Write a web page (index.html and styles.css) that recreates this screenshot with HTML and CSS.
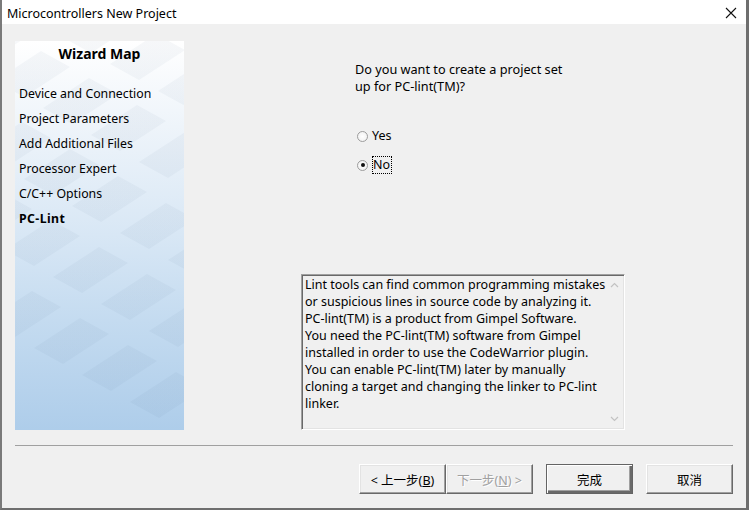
FILE: index.html
```html
<!DOCTYPE html>
<html>
<head>
    <meta charset="UTF-8">
    <link rel="stylesheet" href="styles.css">
</head>
<body>
    <div class="window">
        <div class="titlebar">
            <span class="title">Microcontrollers New Project</span>
            <svg class="close-icon" width="12" height="12" viewBox="0 0 12 12">
                <path d="M1 1 L11 11 M11 1 L1 11" stroke="#111" stroke-width="1.1" fill="none"/>
            </svg>
        </div>

        <div class="content">
            <div class="main">
                <div class="wizard-map">
                    <svg class="tiles" width="169" height="389" viewBox="0 0 169 389">
                        <defs>
                            <linearGradient id="fade" gradientUnits="userSpaceOnUse" x1="0" y1="0" x2="0" y2="389">
                                <stop offset="0" stop-color="#36557a" stop-opacity="0.045"/>
                                <stop offset="0.72" stop-color="#36557a" stop-opacity="0.055"/>
                                <stop offset="0.86" stop-color="#36557a" stop-opacity="0"/>
                            </linearGradient>
                            <polygon id="tile" points="0,0 46,-30 75,-14 29,16"/>
                        </defs>
                        <g fill="url(#fade)">
                            <use href="#tile" x="47" y="-4"/>
                            <use href="#tile" x="95" y="23"/>
                            <use href="#tile" x="143" y="50"/>
                            <use href="#tile" x="-68" y="13"/>
                            <use href="#tile" x="-20" y="40"/>
                            <use href="#tile" x="28" y="67"/>
                            <use href="#tile" x="76" y="94"/>
                            <use href="#tile" x="124" y="121"/>
                            <use href="#tile" x="-39" y="111"/>
                            <use href="#tile" x="9" y="138"/>
                            <use href="#tile" x="57" y="165"/>
                            <use href="#tile" x="105" y="192"/>
                            <use href="#tile" x="153" y="219"/>
                            <use href="#tile" x="-58" y="182"/>
                            <use href="#tile" x="-10" y="209"/>
                            <use href="#tile" x="38" y="236"/>
                            <use href="#tile" x="86" y="263"/>
                            <use href="#tile" x="134" y="290"/>
                            <use href="#tile" x="-29" y="280"/>
                            <use href="#tile" x="19" y="307"/>
                            <use href="#tile" x="67" y="334"/>
                            <use href="#tile" x="115" y="361"/>
                        </g>
                    </svg>
                    <div class="map-title">Wizard Map</div>
                    <ul class="steps">
                        <li>Device and Connection</li>
                        <li>Project Parameters</li>
                        <li>Add Additional Files</li>
                        <li>Processor Expert</li>
                        <li>C/C++ Options</li>
                        <li class="current">PC-Lint</li>
                    </ul>
                </div>

                <div class="page">
                    <p class="question">Do you want to create a project set<br>up for PC-lint(TM)?</p>
                    <div class="options">
                        <label class="radio">
                            <span class="radio-dot"></span>
                            <span class="radio-label">Yes</span>
                        </label>
                        <label class="radio checked">
                            <span class="radio-dot"></span>
                            <span class="radio-label focused">No</span>
                        </label>
                    </div>
                    <div class="info">
                        <div class="info-text">Lint tools can find common programming mistakes<br>or suspicious lines in source code by analyzing it.<br>PC-lint(TM) is a product from Gimpel Software.<br>You need the PC-lint(TM) software from Gimpel<br>installed in order to use the CodeWarrior plugin.<br>You can enable PC-lint(TM) later by manually<br>cloning a target and changing the linker to PC-lint<br>linker.</div>
                        <div class="scrollbar">
                            <svg width="9" height="6" viewBox="0 0 9 6"><path d="M1 5 L4.5 1.5 L8 5" stroke="#c2c2c2" stroke-width="1.2" fill="none"/></svg>
                            <svg width="9" height="6" viewBox="0 0 9 6"><path d="M1 1 L4.5 4.5 L8 1" stroke="#c2c2c2" stroke-width="1.2" fill="none"/></svg>
                        </div>
                    </div>
                </div>
            </div>

            <div class="separator"></div>

            <div class="buttons">
                <button class="btn">&lt; 上一步(<u>B</u>)</button>
                <button class="btn" disabled>下一步(<u>N</u>) &gt;</button>
                <button class="btn default">完成</button>
                <button class="btn">取消</button>
            </div>
        </div>
    </div>
</body>
</html>
```

FILE: styles.css
```css
* {
    margin: 0;
    padding: 0;
    box-sizing: border-box;
}

body {
    font-family: "Noto Sans", "Noto Sans CJK SC", sans-serif;
    font-size: 12.5px;
    color: #000;
    background: #f0f0f0;
}

.window {
    width: 749px;
    height: 510px;
    background: #f0f0f0;
    border-left: 2px solid #7a7a7a;
    border-right: 3px solid #6e6e6e;
    border-bottom: 2px solid #6e6e6e;
    display: flex;
    flex-direction: column;
}

.titlebar {
    height: 24px;
    background: #fff;
    display: flex;
    align-items: center;
    justify-content: space-between;
    padding: 2px 9px 0 5px;
}

.title {
    font-size: 12.5px;
}

.close-icon {
    display: block;
}

.content {
    flex: 1;
    padding: 17px 13px 14px 13px;
    display: flex;
    flex-direction: column;
}

.main {
    display: flex;
    height: 389px;
}

.wizard-map {
    position: relative;
    width: 169px;
    height: 389px;
    background: linear-gradient(to bottom, #ffffff 0%, #eef4fa 22%, #d8e7f5 50%, #c4dbf0 72%, #aecdea 100%);
    overflow: hidden;
}

.tiles {
    position: absolute;
    left: 0;
    top: 0;
}

.map-title {
    position: relative;
    text-align: center;
    font-weight: bold;
    font-size: 14px;
    line-height: 17px;
    margin-top: 4px;
}

.steps {
    position: relative;
    list-style: none;
    margin-top: 19px;
    padding-left: 4px;
}

.steps li {
    line-height: 25px;
    font-size: 12.3px;
}

.steps li.current {
    font-weight: bold;
    letter-spacing: 0.4px;
}

.page {
    flex: 1;
    margin-left: 117px;
    display: flex;
    flex-direction: column;
}

.question {
    margin: 20px 0 0 54px;
    line-height: 17px;
    font-size: 12.7px;
}

.options {
    margin: 32px 0 0 56px;
    display: flex;
    flex-direction: column;
    gap: 11px;
}

.radio {
    display: flex;
    align-items: center;
    gap: 4px;
    height: 18px;
}

.radio-dot {
    width: 11px;
    height: 11px;
    border-radius: 50%;
    border: 1px solid #9d9d9d;
    background: radial-gradient(circle, #ffffff 0%, #eeeeee 100%);
    display: flex;
    align-items: center;
    justify-content: center;
}

.radio.checked .radio-dot::after {
    content: "";
    width: 4px;
    height: 4px;
    border-radius: 50%;
    background: #111;
}

.radio-label {
    line-height: 16px;
}

.radio-label.focused {
    border: 1px dotted #000;
    padding: 0 1px 0 0;
}

.info {
    margin-top: auto;
    width: 324px;
    height: 156px;
    display: flex;
    border: 1px solid;
    border-color: #a0a0a0 #ffffff #ffffff #a0a0a0;
    box-shadow: inset 1px 1px #696969, inset -1px -1px #e3e3e3;
}

.info-text {
    flex: 1;
    padding: 1px 0 0 3px;
    line-height: 17px;
    white-space: nowrap;
}

.scrollbar {
    width: 17px;
    display: flex;
    flex-direction: column;
    justify-content: space-between;
    align-items: center;
    padding: 7px 0 7px 0;
    margin-right: 1px;
}

.scrollbar svg {
    display: block;
}

.separator {
    margin-top: 15px;
    height: 1px;
    background: #a0a0a0;
}

.buttons {
    margin-top: 18px;
    display: flex;
    justify-content: flex-end;
}

.btn {
    width: 87px;
    height: 30px;
    font-family: "Noto Sans", "Noto Sans CJK SC", sans-serif;
    font-size: 12.5px;
    color: #000;
    background: #f0f0f0;
    border: 1px solid;
    border-color: #ffffff #696969 #696969 #ffffff;
    box-shadow: inset -1px -1px #a0a0a0, inset 1px 1px #e3e3e3;
    margin-left: 13px;
}

.btn:first-child,
.btn:nth-child(2) {
    margin-left: 0;
}

.btn u {
    text-decoration: underline;
}

.btn:disabled {
    color: #a0a0a0;
    text-shadow: 1px 1px #fff;
}

.btn.default {
    border: 1px solid #646464;
    box-shadow: inset 1px 1px #ffffff, inset -2px -2px #696969, inset -3px -3px #a0a0a0;
}
```
